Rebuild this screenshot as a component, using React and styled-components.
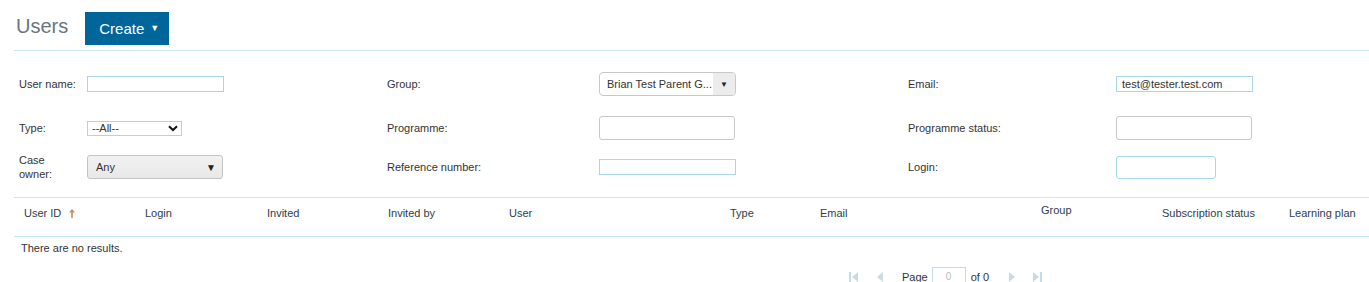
import React from "react"
import styled, { createGlobalStyle } from "styled-components"

const GlobalStyle = createGlobalStyle`
    body {
        margin: 0;
        background: #fff;
        font-family: "Liberation Sans", Arial, sans-serif;
        font-size: 11px;
        color: #333;
    }
`

const Page = styled.div`
    width: 1369px;
    height: 282px;
    overflow: hidden;
    padding-left: 14px;
    box-sizing: border-box;
`

const TitleBar = styled.div`
    display: flex;
    align-items: center;
    gap: 17px;
    height: 51px;
    padding-left: 2px;
    padding-top: 10px;
    box-sizing: border-box;
    border-bottom: 1px solid #c7e8f4;
`

const Title = styled.h1`
    margin: 0;
    font-weight: normal;
    font-size: 20px;
    color: #6a757e;
    margin-bottom: 8px;
`

const CreateButton = styled.button`
    display: flex;
    align-items: center;
    justify-content: center;
    gap: 6px;
    width: 84px;
    height: 33px;
    margin-bottom: 4px;
    border: none;
    background: #006699;
    color: #fff;
    font-family: inherit;
    font-size: 15px;
    padding: 0 0 0 4px;
`

const Filters = styled.div`
    padding: 21px 0 16px 5px;
    border-bottom: 1px solid #c7e8f4;
`

const FilterRow = styled.div`
    display: grid;
    grid-template-columns: 68px 300px 212px 309px 208px 1fr;
    align-items: center;
    height: ${p => p.$height}px;
    margin-top: ${p => p.$top || 0}px;
`

const Label = styled.div`
    color: #333;
    font-size: 11px;
    line-height: 14px;
    padding-right: ${p => p.$wrap ? "20px" : "0"};
`

const TextBox = styled.div`
    box-sizing: border-box;
    width: ${p => p.$width}px;
    height: ${p => p.$height}px;
    border: 1px solid ${p => p.$grey ? "#c8c8c8" : "#a9d6ea"};
    border-radius: ${p => p.$round ? "3px" : "0"};
    padding: 0 5px;
    display: flex;
    align-items: center;
    font-size: 11px;
    color: #333;
    background: #fff;
`

const SelectBox = styled.div`
    box-sizing: border-box;
    width: ${p => p.$width}px;
    height: ${p => p.$height}px;
    border: 1px solid ${p => p.$border};
    border-radius: ${p => p.$radius}px;
    background: ${p => p.$bg};
    display: flex;
    align-items: center;
    justify-content: space-between;
    padding-left: ${p => p.$pad}px;
    font-size: 11px;
    color: #333;
    overflow: hidden;
`

const SelectArrow = styled.div`
    width: ${p => p.$width}px;
    align-self: stretch;
    display: flex;
    align-items: center;
    justify-content: center;
    background: ${p => p.$bg || "transparent"};
    color: #222;
    font-size: ${p => p.$size || 8}px;
`

const Table = styled.div`
    border-bottom: 1px solid #c7e8f4;
`

const HeaderRow = styled.div`
    display: grid;
    grid-template-columns: 121px 122px 121px 121px 221px 90px 221px 121px 127px 1fr;
    height: 38px;
    box-sizing: border-box;
    padding: 0 0 8px 10px;
    align-items: center;
`

const HeaderCell = styled.div`
    font-size: 11px;
    color: #2f3d4b;
    display: flex;
    align-items: center;
    gap: 8px;
    margin-top: ${p => p.$raise ? "-6px" : "0"};
`

const Empty = styled.div`
    padding: 5px 0 0 7px;
    height: 21px;
    font-size: 11px;
    color: #333;
`

const Pager = styled.div`
    display: flex;
    align-items: center;
    padding-left: 835px;
    margin-top: 4px;
    color: #333;
    font-size: 11px;
`

const PagerIcon = styled.svg`
    width: 10px;
    height: 10px;
    margin-right: ${p => p.$gap}px;
    fill: #cbdbe6;
`

const PageInput = styled.div`
    box-sizing: border-box;
    width: 34px;
    height: 20px;
    margin: 0 5px 0 4px;
    border: 1px solid #c2dcea;
    color: #bbb;
    font-size: 10px;
    padding: 3px 0 0 13px;
`

const OfText = styled.span`
    margin-right: 18px;
`

const columns = [
    "User ID", "Login", "Invited", "Invited by", "User", "Type",
    "Email", "Group", "Subscription status", "Learning plan"
]

function SortArrow() {
    return (
        <svg width="6" height="9" viewBox="0 0 6 9">
            <path d="M3 0 L6 3.5 H3.8 V9 H2.2 V3.5 H0 Z" fill="#d08a5a" />
        </svg>
    )
}

function Chevron() {
    return (
        <svg width="10" height="7" viewBox="0 0 10 7">
            <path d="M1 1.2 L5 5 L9 1.2" stroke="#111" strokeWidth="2" fill="none" />
        </svg>
    )
}

export default function App() {
    return (
        <Page>
            <GlobalStyle />
            <TitleBar>
                <Title>Users</Title>
                <CreateButton>Create <span style={{ fontSize: 9 }}>▼</span></CreateButton>
            </TitleBar>

            <Filters>
                <FilterRow $height={24}>
                    <Label>User name:</Label>
                    <TextBox $width={137} $height={16} />
                    <Label>Group:</Label>
                    <SelectBox $width={137} $height={24} $border="#c8c8c8" $radius={4} $bg="#fff" $pad={7}>
                        Brian Test Parent G...
                        <SelectArrow $width={22} $bg="#ececec">▼</SelectArrow>
                    </SelectBox>
                    <Label>Email:</Label>
                    <TextBox $width={137} $height={16}>test@tester.test.com</TextBox>
                </FilterRow>

                <FilterRow $height={24} $top={20}>
                    <Label>Type:</Label>
                    <SelectBox $width={95} $height={15} $border="#a9d6ea" $radius={0} $bg="#fff" $pad={4}>
                        --All--
                        <SelectArrow $width={16}><Chevron /></SelectArrow>
                    </SelectBox>
                    <Label>Programme:</Label>
                    <TextBox $width={136} $height={24} $grey $round />
                    <Label>Programme status:</Label>
                    <TextBox $width={136} $height={24} $grey $round />
                </FilterRow>

                <FilterRow $height={28} $top={13}>
                    <Label $wrap>Case owner:</Label>
                    <SelectBox $width={136} $height={24} $border="#c4c4c4" $radius={3} $bg="linear-gradient(#f2f2f2, #e8e8e8)" $pad={8}>
                        Any
                        <SelectArrow $width={22} $size={10}>▼</SelectArrow>
                    </SelectBox>
                    <Label>Reference number:</Label>
                    <TextBox $width={137} $height={16} />
                    <Label>Login:</Label>
                    <TextBox $width={100} $height={23} $round />
                </FilterRow>
            </Filters>

            <Table>
                <HeaderRow>
                    {columns.map(c => (
                        <HeaderCell key={c} $raise={c === "Group"}>
                            {c}
                            {c === "User ID" && <SortArrow />}
                        </HeaderCell>
                    ))}
                </HeaderRow>
            </Table>
            <Empty>There are no results.</Empty>

            <Pager>
                <PagerIcon $gap={16} viewBox="0 0 10 10"><path d="M0 0 H2 V10 H0 Z M9 0 V10 L3 5 Z" /></PagerIcon>
                <PagerIcon $gap={17} viewBox="0 0 10 10"><path d="M8 0 V10 L2 5 Z" /></PagerIcon>
                Page
                <PageInput>0</PageInput>
                <OfText>of 0</OfText>
                <PagerIcon $gap={15} viewBox="0 0 10 10"><path d="M2 0 V10 L8 5 Z" /></PagerIcon>
                <PagerIcon $gap={0} viewBox="0 0 10 10"><path d="M1 0 V10 L7 5 Z M8 0 H10 V10 H8 Z" /></PagerIcon>
            </Pager>
        </Page>
    )
}
